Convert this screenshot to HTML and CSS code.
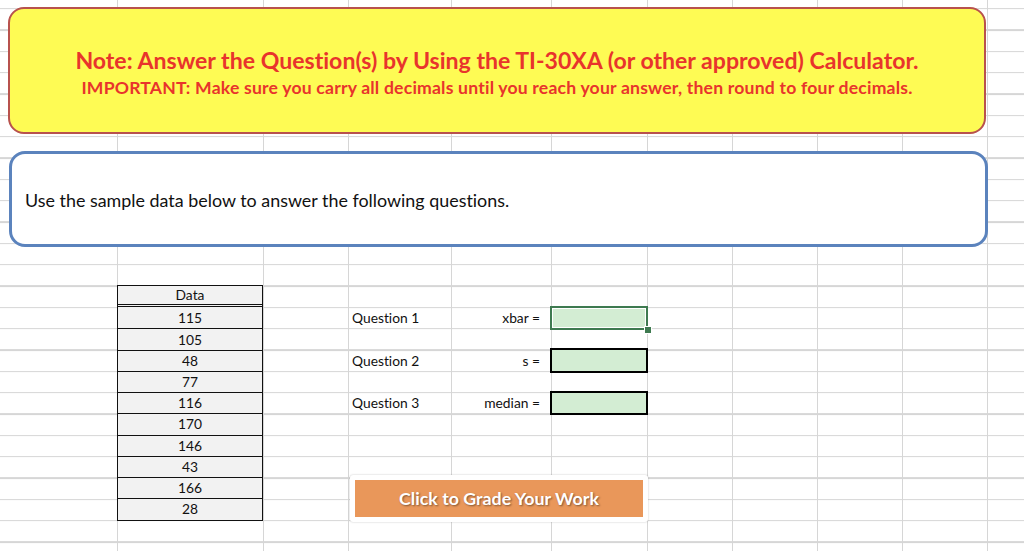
FILE: index.html
```html
<!DOCTYPE html>
<html lang="en">

<head>
    <meta charset="UTF-8">
    <meta name="viewport" content="width=device-width, initial-scale=1.0">
    <title>Sample Data Questions</title>
    <link rel="stylesheet" href="styles.css">
</head>

<body>
    <div class="sheet">
        <div class="note">
            <div class="note-title">Note: Answer the Question(s) by Using the TI-30XA (or other approved) Calculator.</div>
            <div class="note-sub">IMPORTANT: Make sure you carry all decimals until you reach your answer, then round to four decimals.</div>
        </div>

        <div class="intro">Use the sample data below to answer the following questions.</div>

        <div class="data-table">
            <div class="data-head">Data</div>
            <div class="data-cell">115</div>
            <div class="data-cell">105</div>
            <div class="data-cell">48</div>
            <div class="data-cell">77</div>
            <div class="data-cell">116</div>
            <div class="data-cell">170</div>
            <div class="data-cell">146</div>
            <div class="data-cell">43</div>
            <div class="data-cell">166</div>
            <div class="data-cell">28</div>
        </div>

        <div class="question q1">Question 1</div>
        <div class="label q1">xbar =</div>
        <div class="answer q1 selected"><span class="handle"></span></div>

        <div class="question q2">Question 2</div>
        <div class="label q2">s =</div>
        <div class="answer q2"></div>

        <div class="question q3">Question 3</div>
        <div class="label q3">median =</div>
        <div class="answer q3"></div>

        <div class="grade-frame">
            <button class="grade-btn">Click to Grade Your Work</button>
        </div>
    </div>
</body>

</html>
```

FILE: styles.css
```css
body {
    margin: 0;
    font-family: Lato, "Open Sans", sans-serif;
    font-variant-ligatures: none;
    background: #fff;
    overflow: hidden;
}

/* spreadsheet grid: columns match the cell widths, rows are 21.33px */
.sheet {
    position: relative;
    width: 1024px;
    height: 551px;
    display: grid;
    grid-template-columns: 117px 146px 85px 103px 101px 95px 85px 85px 85px 85px 1fr;
    grid-template-rows: 8.7px repeat(26, 21.333px);
    background-image:
        linear-gradient(#d6d6d6, #d6d6d6),
        linear-gradient(#d6d6d6, #d6d6d6),
        linear-gradient(#d6d6d6, #d6d6d6),
        linear-gradient(#d6d6d6, #d6d6d6),
        linear-gradient(#d6d6d6, #d6d6d6),
        linear-gradient(#d6d6d6, #d6d6d6),
        linear-gradient(#d6d6d6, #d6d6d6),
        linear-gradient(#d6d6d6, #d6d6d6),
        linear-gradient(#d6d6d6, #d6d6d6),
        linear-gradient(#d6d6d6, #d6d6d6),
        repeating-linear-gradient(to bottom, #d6d6d6 0 1.2px, transparent 1.2px 21.333px);
    background-size:
        1.3px 100%, 1.3px 100%, 1.3px 100%, 1.3px 100%, 1.3px 100%,
        1.3px 100%, 1.3px 100%, 1.3px 100%, 1.3px 100%, 1.3px 100%,
        100% 100%;
    background-position:
        116.5px 0, 262.5px 0, 347.8px 0, 450.8px 0, 551.3px 0,
        646.5px 0, 731.5px 0, 816.5px 0, 901.5px 0, 986.5px 0,
        0 8.1px;
    background-repeat: no-repeat, no-repeat, no-repeat, no-repeat, no-repeat,
        no-repeat, no-repeat, no-repeat, no-repeat, no-repeat, repeat;
}

.note {
    position: absolute;
    left: 8px;
    top: 7px;
    width: 978px;
    height: 127px;
    box-sizing: border-box;
    border: 2.5px solid #b8524d;
    border-radius: 16px;
    background: #fefb54;
    color: #e8342c;
    font-weight: 700;
    text-align: center;
    padding-top: 37px;
}

.note-title {
    font-size: 23.1px;
    line-height: 28px;
}

.note-sub {
    font-size: 17.6px;
    letter-spacing: 0.2px;
    line-height: 27.6px;
}

.intro {
    position: absolute;
    left: 9px;
    top: 151px;
    width: 979px;
    height: 96px;
    box-sizing: border-box;
    border: 3.5px solid #5b83bd;
    border-radius: 16px;
    background: #fff;
    display: flex;
    align-items: center;
    padding: 1px 0 0 13px;
    font-size: 17.9px;
    color: #111;
}

.data-table {
    grid-column: 2;
    grid-row: 15 / 26;
    display: grid;
    grid-template-rows: repeat(11, 1fr);
    border: 1.5px solid #111;
    margin: -1px 0 0 0;
    font-size: 13.8px;
    color: #111;
}

.data-head,
.data-cell {
    background: #f2f2f2;
    display: flex;
    align-items: center;
    justify-content: center;
    padding-bottom: 1px;
}

.data-head {
    border-bottom: 3.5px double #111;
}

.data-cell + .data-cell {
    border-top: 1.4px solid #111;
}

.question,
.label {
    display: flex;
    align-items: center;
    font-size: 13.8px;
    color: #111;
    padding-bottom: 1px;
}

.question {
    grid-column: 4;
    padding-left: 4px;
}

.label {
    grid-column: 5;
    justify-content: flex-end;
    padding-right: 12px;
}

.answer {
    grid-column: 6;
    position: relative;
    margin: -1.5px -1px -1.5px -2.5px;
    border: 2.8px solid #000;
    background: #d3edd3;
}

.answer.selected {
    border: 2.2px solid #3e7a50;
    box-shadow: inset 0 0 0 1px #fff;
}

.handle {
    position: absolute;
    right: -6px;
    bottom: -6px;
    width: 6px;
    height: 6px;
    background: #3e7a50;
    border: 1px solid #fff;
}

.q1 { grid-row: 16; }
.q2 { grid-row: 18; }
.q3 { grid-row: 20; }

.grade-frame {
    grid-column: 4 / 7;
    grid-row: 24 / 26;
    margin: -2.5px -1px -1px 2px;
    background: #fff;
    border-radius: 3px;
    box-shadow: 0 0 2px rgba(0, 0, 0, 0.25);
    padding: 5px;
    display: flex;
}

.grade-btn {
    flex: 1;
    border: none;
    background: #e9975a;
    color: #fff;
    font-family: Lato, "Open Sans", sans-serif;
    font-weight: 700;
    font-size: 17.8px;
    text-shadow: 1px 1px 2px rgba(0, 0, 0, 0.45);
    padding: 0;
}
```
